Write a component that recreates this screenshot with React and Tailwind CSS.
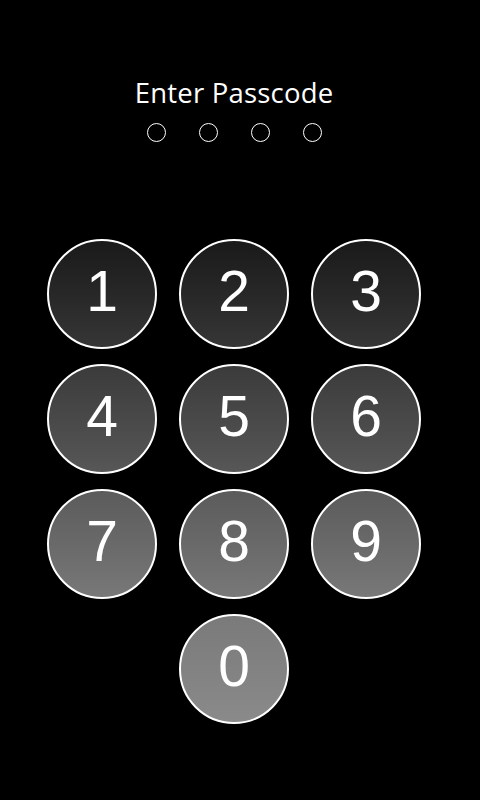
import React from 'react';

const rows = [
  { keys: ['1', '2', '3'], bg: 'bg-gradient-to-b from-[#1a1a1a] to-[#363636]' },
  { keys: ['4', '5', '6'], bg: 'bg-gradient-to-b from-[#3b3b3b] to-[#575757]' },
  { keys: ['7', '8', '9'], bg: 'bg-gradient-to-b from-[#5b5b5b] to-[#787878]' },
];

const Key = ({ label, bg }) => (
  <button
    className={`w-[110px] h-[110px] rounded-full border-2 border-white flex items-center justify-center pb-[5px] text-white text-[57px] leading-none ${bg}`}
    style={{ fontFamily: '"Liberation Sans", Arial, sans-serif' }}
  >
    {label}
  </button>
);

const App = () => {
  return (
    <div className="w-[480px] h-[800px] bg-black flex flex-col items-center pr-[12px] overflow-hidden">
      <h1
        className="mt-[76px] text-white text-[27.5px] font-medium leading-[34px] tracking-[0.2px]"
        style={{ fontFamily: '"Open Sans", "Noto Sans", sans-serif' }}
      >
        Enter Passcode
      </h1>
      <div className="mt-[13px] flex gap-[33px]">
        {[0, 1, 2, 3].map((i) => (
          <span key={i} className="w-[19px] h-[19px] rounded-full border-[1.5px] border-white" />
        ))}
      </div>
      <div className="mt-[97px] grid grid-cols-[110px_110px_110px] gap-x-[22px] gap-y-[15px]">
        {rows.map((row) =>
          row.keys.map((k) => <Key key={k} label={k} bg={row.bg} />)
        )}
        <div />
        <Key label="0" bg="bg-gradient-to-b from-[#7a7a7a] to-[#8a8a8a]" />
      </div>
    </div>
  );
};

export default App;
